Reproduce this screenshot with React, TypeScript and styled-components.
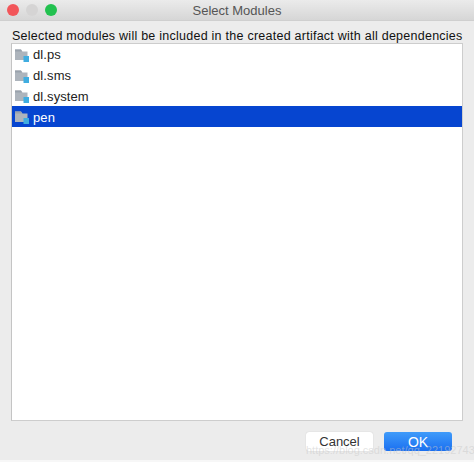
import styled, { createGlobalStyle } from 'styled-components';

const modules = ['dl.ps', 'dl.sms', 'dl.system', 'pen'];

const GlobalStyle = createGlobalStyle`
  html, body {
    margin: 0;
    padding: 0;
    background: #fff;
  }
`;

function ModuleIcon() {
  return (
    <svg width="16" height="16" viewBox="0 0 16 16">
      <path d="M0 2.500h6l1.500 2H12.500v8.500H0z" fill="#adb4bc" />
      <path d="M0 2.500h6l1 2H0z" fill="#99a2ac" />
      <rect x="8.500" y="9" width="5.500" height="6" fill="#40ade0" />
    </svg>
  );
}

function App() {
  return (
    <Dialog>
      <GlobalStyle />
      <TitleBar>
        <Lights>
          <Light $color="#f2565a" />
          <Light $color="#d5d4d4" />
          <Light $color="#22c14f" />
        </Lights>
        <Title>Select Modules</Title>
      </TitleBar>
      <Content>
        <Description>Selected modules will be included in the created artifact with all dependencies</Description>
        <ModuleList>
          {modules.map((name) => (
            <ModuleRow key={name} $selected={name === 'pen'}>
              <ModuleIcon />
              {name}
            </ModuleRow>
          ))}
        </ModuleList>
        <Footer>
          <CancelButton>Cancel</CancelButton>
          <OkButton>OK</OkButton>
        </Footer>
      </Content>
      <Watermark>https://blog.csdn.net/qq_22192743</Watermark>
    </Dialog>
  );
}

const Dialog = styled.div`
  position: relative;
  width: 474px;
  height: 462px;
  overflow: hidden;
  display: flex;
  flex-direction: column;
  background: #ececec;
  box-shadow: inset 0 -2px 0 #f7f7f7;
  font-family: 'Liberation Sans', Arial, sans-serif;
`;

const TitleBar = styled.div`
  position: relative;
  flex: none;
  box-sizing: border-box;
  height: 21px;
  display: flex;
  align-items: center;
  justify-content: center;
  background: linear-gradient(#ebebeb, #d6d6d6);
  border-bottom: 1px solid #cfcfcf;
`;

const Lights = styled.div`
  position: absolute;
  left: 7px;
  top: 4px;
  display: flex;
  gap: 7px;
`;

const Light = styled.span<{ $color: string }>`
  width: 12px;
  height: 12px;
  border-radius: 50%;
  background: ${(p) => p.$color};
`;

const Title = styled.div`
  font-size: 13px;
  color: #555;
`;

const Content = styled.div`
  flex: 1;
  display: flex;
  flex-direction: column;
  padding: 8px 11px 0 11px;
`;

const Description = styled.div`
  height: 14px;
  font-size: 12.5px;
  line-height: 15px;
  color: #111;
  white-space: nowrap;
  letter-spacing: 0.25px;
  padding-left: 1px;
`;

const ModuleList = styled.div`
  height: 378px;
  box-sizing: border-box;
  display: flex;
  flex-direction: column;
  background: #fff;
  border: 1px solid #cdcdcd;
  border-left-color: #c4c4c4;
`;

const ModuleRow = styled.div<{ $selected: boolean }>`
  box-sizing: border-box;
  height: 20.8px;
  display: flex;
  align-items: center;
  gap: 2px;
  padding: 1px 0 0 3px;
  font-size: 13px;
  letter-spacing: 0.1px;
  color: ${(p) => (p.$selected ? '#fff' : '#222')};
  background: ${(p) => (p.$selected ? '#0645d0' : 'transparent')};
`;

const Footer = styled.div`
  display: flex;
  justify-content: flex-end;
  gap: 11px;
  padding: 11px 11px 0 0;
`;

const CancelButton = styled.button`
  width: 67px;
  height: 19px;
  padding: 0;
  border: none;
  border-radius: 3px;
  background: #fff;
  box-shadow: 0 0 1px #bbb;
  color: #333;
  font-family: inherit;
  font-size: 13px;
`;

const OkButton = styled(CancelButton)`
  width: 68px;
  background: linear-gradient(#3f9bfa, #1a6ff0);
  color: #fff;
  font-size: 14px;
  box-shadow: none;
`;

const Watermark = styled.div`
  position: absolute;
  left: 306px;
  top: 443px;
  font-size: 11px;
  line-height: 15px;
  white-space: nowrap;
  color: rgba(200, 200, 200, 0.5);
`;

export default App;
